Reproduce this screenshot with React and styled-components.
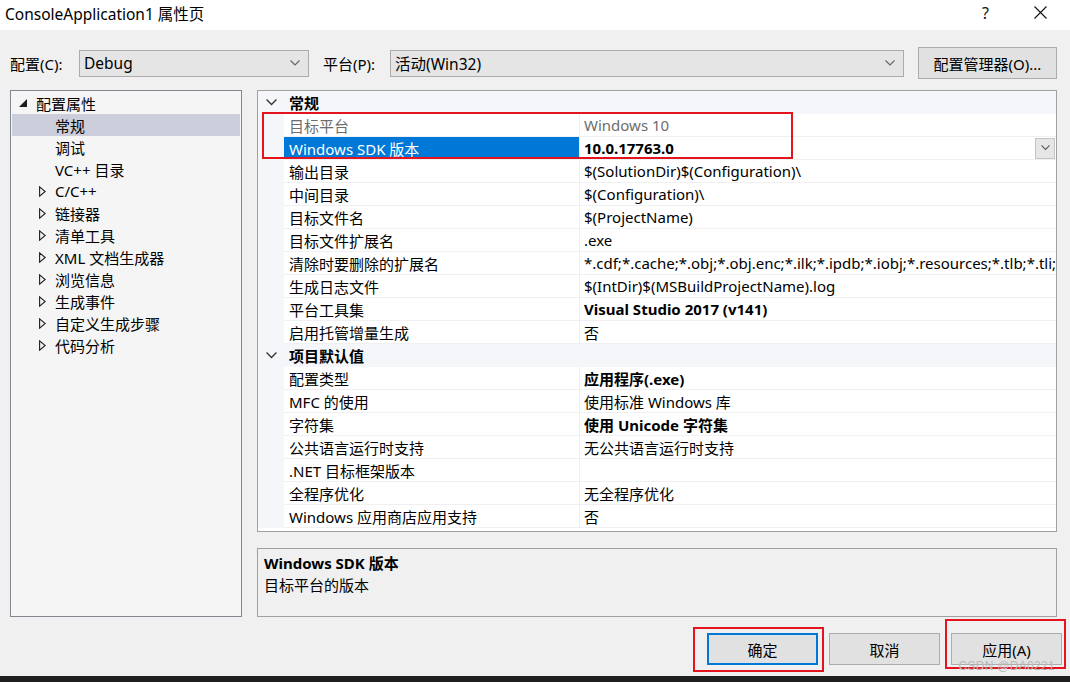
import styled, { createGlobalStyle } from "styled-components";

const GlobalStyle = createGlobalStyle`
  html, body {
    margin: 0;
    padding: 0;
    background: #f0f0f0;
  }
  body {
    font-family: "Segoe UI", "Noto Sans", "Noto Sans CJK SC", sans-serif;
    font-size: 15px;
    color: #000;
  }
`;

const treeItems = [
  { name: "常规" },
  { name: "调试" },
  { name: "VC++ 目录" },
  { name: "C/C++", expander: true },
  { name: "链接器", expander: true },
  { name: "清单工具", expander: true },
  { name: "XML 文档生成器", expander: true },
  { name: "浏览信息", expander: true },
  { name: "生成事件", expander: true },
  { name: "自定义生成步骤", expander: true },
  { name: "代码分析", expander: true },
];

const groups = [
  {
    title: "常规",
    rows: [
      { name: "目标平台", value: "Windows 10", dim: true },
      { name: "Windows SDK 版本", value: "10.0.17763.0", bold: true, selected: true },
      { name: "输出目录", value: "$(SolutionDir)$(Configuration)\\" },
      { name: "中间目录", value: "$(Configuration)\\" },
      { name: "目标文件名", value: "$(ProjectName)" },
      { name: "目标文件扩展名", value: ".exe" },
      {
        name: "清除时要删除的扩展名",
        value: "*.cdf;*.cache;*.obj;*.obj.enc;*.ilk;*.ipdb;*.iobj;*.resources;*.tlb;*.tli;",
      },
      { name: "生成日志文件", value: "$(IntDir)$(MSBuildProjectName).log" },
      { name: "平台工具集", value: "Visual Studio 2017 (v141)", bold: true },
      { name: "启用托管增量生成", value: "否" },
    ],
  },
  {
    title: "项目默认值",
    rows: [
      { name: "配置类型", value: "应用程序(.exe)", bold: true },
      { name: "MFC 的使用", value: "使用标准 Windows 库" },
      { name: "字符集", value: "使用 Unicode 字符集", bold: true },
      { name: "公共语言运行时支持", value: "无公共语言运行时支持" },
      { name: ".NET 目标框架版本", value: "" },
      { name: "全程序优化", value: "无全程序优化" },
      { name: "Windows 应用商店应用支持", value: "否" },
    ],
  },
];

function Chevron({ size = 10, color = "#444" }) {
  return (
    <svg width={size} height={size * 0.6} viewBox="0 0 10 6">
      <path d="M0.5 0.5 L5 5 L9.5 0.5" fill="none" stroke={color} strokeWidth="1.2" />
    </svg>
  );
}

function ExpandedTri() {
  return (
    <svg width="8" height="8" viewBox="0 0 8 8">
      <path d="M8 0 L8 8 L0 8 Z" fill="#1e1e1e" />
    </svg>
  );
}

function CollapsedTri() {
  return (
    <svg width="7" height="11" viewBox="0 0 7 11">
      <path d="M0.6 0.8 L6.2 5.5 L0.6 10.2 Z" fill="none" stroke="#1e1e1e" strokeWidth="1.1" />
    </svg>
  );
}

export default function App() {
  return (
    <Window>
      <GlobalStyle />
      <TitleBar>
        <TitleText>ConsoleApplication1 属性页</TitleText>
        <TitleButtons>
          <TitleBtn>?</TitleBtn>
          <TitleBtn>
            <svg width="13" height="13" viewBox="0 0 13 13">
              <path d="M0.5 0.5 L12.5 12.5 M12.5 0.5 L0.5 12.5" stroke="#111" strokeWidth="1.1" />
            </svg>
          </TitleBtn>
        </TitleButtons>
      </TitleBar>

      <Body>
        <ConfigRow>
          <FieldLabel>配置(C):</FieldLabel>
          <Select width="230px">
            <span>Debug</span>
            <Chevron size={10} color="#666" />
          </Select>
          <FieldLabel $gap>平台(P):</FieldLabel>
          <Select width="514px">
            <span>活动(Win32)</span>
            <Chevron size={10} color="#666" />
          </Select>
          <Button width="139px" $side>配置管理器(O)...</Button>
        </ConfigRow>

        <Main>
          <TreePanel>
            <TreeRow>
              <TreeIcon $root><ExpandedTri /></TreeIcon>
              <span>配置属性</span>
            </TreeRow>
            {treeItems.map((it, i) => (
              <TreeRow key={i} $selected={i === 0} $child>
                <TreeIcon>{it.expander ? <CollapsedTri /> : null}</TreeIcon>
                <span>{it.name}</span>
              </TreeRow>
            ))}
          </TreePanel>

          <RightCol>
            <GridPanel>
              {groups.map((g) => (
                <div key={g.title}>
                  <GroupRow>
                    <Gutter>
                      <Chevron size={11} color="#333" />
                    </Gutter>
                    <GroupTitle>{g.title}</GroupTitle>
                  </GroupRow>
                  {g.rows.map((r) => (
                    <PropRow key={r.name}>
                      <Gutter />
                      <NameCell $selected={r.selected} $dim={r.dim}>
                        {r.name}
                      </NameCell>
                      <ValueCell $bold={r.bold} $dim={r.dim}>
                        <ValueText>{r.value}</ValueText>
                        {r.selected && (
                          <DropBtn>
                            <Chevron size={9} color="#555" />
                          </DropBtn>
                        )}
                      </ValueCell>
                    </PropRow>
                  ))}
                </div>
              ))}
              <RedBox style={{ left: 4, top: 21, width: 531, height: 47 }} />
            </GridPanel>

            <DescPanel>
              <DescTitle>Windows SDK 版本</DescTitle>
              <div>目标平台的版本</div>
            </DescPanel>
          </RightCol>
        </Main>

        <ButtonRow>
          <Annotated>
            <Button width="111px" $primary>确定</Button>
            <RedBox style={{ left: -14, top: -6, width: 131, height: 45 }} />
          </Annotated>
          <Button width="111px">取消</Button>
          <Annotated>
            <Button width="111px">应用(A)</Button>
            <RedBox style={{ left: -6, top: -14, width: 121, height: 50 }} />
            <Watermark>CSDN @DA0221</Watermark>
          </Annotated>
        </ButtonRow>
      </Body>

      <BottomStrip />
    </Window>
  );
}

const Window = styled.div`
  width: 1070px;
  height: 682px;
  display: flex;
  flex-direction: column;
  background: #f0f0f0;
  overflow: hidden;
`;

const TitleBar = styled.div`
  height: 30px;
  flex-shrink: 0;
  background: #fff;
  display: flex;
  align-items: center;
  justify-content: space-between;
  padding-left: 5px;
`;

const TitleText = styled.div`
  font-size: 15.5px;
  margin-top: -4px;
`;

const TitleButtons = styled.div`
  display: flex;
  align-items: center;
  margin-top: -5px;
  padding-right: 23px;
  gap: 45px;
`;

const TitleBtn = styled.div`
  font-size: 16px;
  color: #111;
  display: flex;
  align-items: center;
`;

const Body = styled.div`
  flex: 1;
  display: flex;
  flex-direction: column;
  padding: 17px 0 0 10px;
`;

const ConfigRow = styled.div`
  height: 32px;
  display: flex;
  align-items: center;
`;

const FieldLabel = styled.div`
  margin-left: ${(p) => (p.$gap ? "14px" : "0")};
  width: ${(p) => (p.$gap ? "67px" : "69px")};
`;

const Select = styled.div`
  width: ${(p) => p.width};
  height: 27px;
  box-sizing: border-box;
  border: 1px solid #acacac;
  background: #e5e5e5;
  display: flex;
  align-items: center;
  justify-content: space-between;
  padding: 0 8px 0 4px;
  font-size: 15.5px;
`;

const Button = styled.div`
  width: ${(p) => p.width};
  height: 32px;
  box-sizing: border-box;
  border: ${(p) => (p.$primary ? "2px solid #0078d7" : "1px solid #adadad")};
  background: #e1e1e1;
  display: flex;
  align-items: center;
  justify-content: center;
  margin-left: ${(p) => (p.$side ? "14px" : "0")};
`;

const Main = styled.div`
  margin-top: 11px;
  height: 527px;
  display: flex;
  gap: 15px;
`;

const TreePanel = styled.div`
  width: 232px;
  box-sizing: border-box;
  border: 1px solid #828790;
  background: #f5f5f5;
  padding: 1px;
`;

const TreeRow = styled.div`
  height: 22px;
  display: flex;
  align-items: center;
  background: ${(p) => (p.$selected ? "#cccedb" : "transparent")};
  padding-left: ${(p) => (p.$child ? "26px" : "0")};
  white-space: nowrap;
`;

const TreeIcon = styled.div`
  width: ${(p) => (p.$root ? "24px" : "17px")};
  box-sizing: border-box;
  padding-left: ${(p) => (p.$root ? "7px" : "1px")};
  display: flex;
  align-items: center;
`;

const RightCol = styled.div`
  width: 800px;
  display: flex;
  flex-direction: column;
  gap: 16px;
`;

const GridPanel = styled.div`
  position: relative;
  height: 442px;
  box-sizing: border-box;
  border: 1px solid #a0a0a0;
  background: #fff;
`;

const GroupRow = styled.div`
  height: 23px;
  display: flex;
  align-items: center;
  background: #f4f6fa;
`;

const Gutter = styled.div`
  width: 25px;
  align-self: stretch;
  flex-shrink: 0;
  background: #f4f6fa;
  display: flex;
  align-items: center;
  justify-content: center;
  padding-left: 1px;
`;

const GroupTitle = styled.div`
  font-weight: bold;
  padding-left: 5px;
`;

const PropRow = styled.div`
  height: 23px;
  display: flex;
`;

const NameCell = styled.div`
  width: 296px;
  flex-shrink: 0;
  box-sizing: border-box;
  padding-left: 5px;
  display: flex;
  align-items: center;
  white-space: nowrap;
  border-bottom: 1px solid #f0f0f0;
  border-right: 1px solid #f0f0f0;
  background: ${(p) => (p.$selected ? "#0078d7" : "#fff")};
  color: ${(p) => (p.$selected ? "#fff" : p.$dim ? "#6d6d6d" : "#000")};
`;

const ValueCell = styled.div`
  flex: 1;
  min-width: 0;
  box-sizing: border-box;
  padding-left: 4px;
  display: flex;
  align-items: center;
  border-bottom: 1px solid #f0f0f0;
  font-weight: ${(p) => (p.$bold ? "bold" : "normal")};
  color: ${(p) => (p.$dim ? "#6d6d6d" : "#000")};
`;

const ValueText = styled.div`
  flex: 1;
  white-space: nowrap;
  overflow: hidden;
`;

const DropBtn = styled.div`
  width: 20px;
  height: 21px;
  box-sizing: border-box;
  border: 1px solid #c4c4c4;
  background: #e6e6e6;
  display: flex;
  align-items: center;
  justify-content: center;
  margin-right: 1px;
`;

const DescPanel = styled.div`
  height: 69px;
  box-sizing: border-box;
  border: 1px solid #a0a0a0;
  background: #f0f0f0;
  padding: 3px 6px;
  line-height: 22px;
`;

const DescTitle = styled.div`
  font-weight: bold;
`;

const ButtonRow = styled.div`
  margin-top: 16px;
  display: flex;
  justify-content: flex-end;
  gap: 11px;
  padding-right: 8px;
`;

const Annotated = styled.div`
  position: relative;
`;

const RedBox = styled.div`
  position: absolute;
  box-sizing: border-box;
  border: 2px solid #e3141e;
  pointer-events: none;
`;

const Watermark = styled.div`
  position: absolute;
  right: 7px;
  bottom: -8px;
  font-family: "Liberation Sans", sans-serif;
  font-size: 12px;
  line-height: 14px;
  color: #b9b9b9;
  letter-spacing: 0.3px;
  white-space: nowrap;
`;

const BottomStrip = styled.div`
  height: 6px;
  flex-shrink: 0;
  background: #1f1f1f;
`;
